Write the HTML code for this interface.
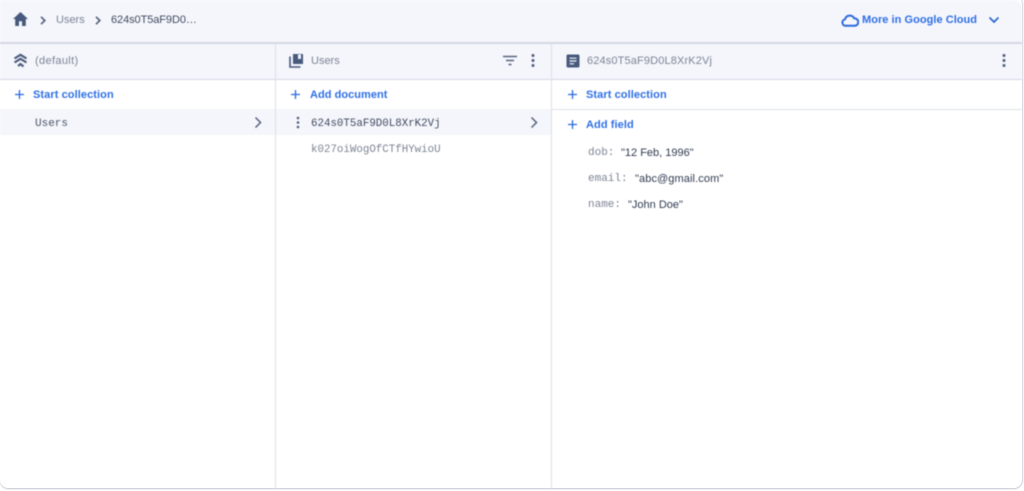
<!DOCTYPE html>
<html><head><meta charset="utf-8"><style>
html,body{margin:0;padding:0;background:#fff;width:1024px;height:491px;overflow:hidden}
body{position:relative;font-family:"Liberation Sans",sans-serif}
#card{position:absolute;left:0;top:-4px;width:1022px;height:492px;background:#fff;border-radius:0 8px 8px 8px;box-shadow:0 1px 1.5px #c4c8d2,1px 0 1.5px #d4d7de;overflow:hidden}
#w{position:absolute;left:0;top:0;width:1024px;height:491px;filter:blur(.4px)}
.bg{position:absolute}
.t{position:absolute;white-space:nowrap;font-size:11px;line-height:14px}
.b{color:#2f6fe4;font-weight:bold;font-size:11px;letter-spacing:.08px}
.m{font-family:"Liberation Mono",monospace;font-size:11px}
svg{position:absolute;display:block}
</style></head><body>
<div id="card"></div>
<div id="w">
<div class="bg" style="left:0;top:0;width:1022px;height:42px;background:#f5f6fc;border-radius:0 8px 0 0"></div>
<div class="bg" style="left:0;top:42px;width:1022px;height:1.5px;background:#d3d7e3"></div>
<div class="bg" style="left:0;top:43.5px;width:1022px;height:35px;background:#f5f6fc"></div>
<div class="bg" style="left:0;top:78.500px;width:1022px;height:1.5px;background:#d3d7e3"></div>
<div class="bg" style="left:0;top:109px;width:275px;height:26px;background:#f5f6fb"></div>
<div class="bg" style="left:276px;top:109px;width:275px;height:26px;background:#f5f6fb"></div>
<div class="bg" style="left:552px;top:109px;width:470px;height:1px;background:#dfe1e8"></div>
<div class="bg" style="left:274.500px;top:43px;width:1.2px;height:445px;background:#dcdfe8"></div>
<div class="bg" style="left:550.500px;top:43px;width:1.2px;height:445px;background:#dcdfe8"></div>

<svg style="left:12px;top:10.500px" width="17" height="16" viewBox="0 0 17 16"><path d="M8.500 1L1 8h2.200v7h3.800v-4.800h3V15h3.800V8H16z" fill="#47597c"/></svg>
<svg style="left:39px;top:15px" width="9" height="11" viewBox="0 0 9 11"><path d="M2 1.800l3.800 3.700L2 9.200" fill="none" stroke="#56637f" stroke-width="1.700"/></svg>
<div class="t" style="left:56px;top:13px;color:#7c8494;font-size:11px">Users</div>
<svg style="left:94px;top:15px" width="9" height="11" viewBox="0 0 9 11"><path d="M2 1.800l3.800 3.700L2 9.200" fill="none" stroke="#56637f" stroke-width="1.700"/></svg>
<div class="t" style="left:111px;top:13px;color:#3f4a60;font-size:11px;letter-spacing:-.08px">624s0T5aF9D0…</div>

<svg style="left:841px;top:13px" width="18" height="14" viewBox="0 0 18 14"><path d="M4.300 12.800a3.300 3.300 0 0 1-.3-6.500A5 5 0 0 1 13.300 5.400a3.700 3.700 0 0 1 .5 7.400z" fill="none" stroke="#2a6ae0" stroke-width="2"/></svg>
<div class="t b" style="left:862px;top:13px;font-size:11px;letter-spacing:.04px">More in Google Cloud</div>
<svg style="left:987px;top:15px" width="14" height="10" viewBox="0 0 14 10"><path d="M2.500 2.500L7 7l4.500-4.500" fill="none" stroke="#2d66c9" stroke-width="1.700"/></svg>

<svg style="left:13px;top:53px" width="15" height="15" viewBox="0 0 15 15"><path d="M1.500 5.500L7.500 1.800l6 3.700M1.500 9.500l6-3.700 6 3.700M5 13l2.500-2 3 2.500" fill="none" stroke="#4c5d7d" stroke-width="2.200"/></svg>
<div class="t" style="left:35px;top:54px;color:#7c8494;letter-spacing:.35px">(default)</div>

<svg style="left:289px;top:53px" width="15" height="15" viewBox="0 0 15 15"><path d="M4 1h10v10H4z" fill="#47597c"/><path d="M9 1.500h3v5l-1.500-1L9 6.500z" fill="#f5f6fc"/><path d="M1 3.500V14h10.500" fill="none" stroke="#47597c" stroke-width="1.600"/></svg>
<div class="t" style="left:311px;top:54px;color:#7c8494">Users</div>
<svg style="left:502px;top:54px" width="16" height="13" viewBox="0 0 16 13"><path d="M1 2.500h14M4 6.500h8M6.500 10.500h3" stroke="#56637f" stroke-width="1.500"/></svg>
<svg style="left:531px;top:53px" width="4" height="15" viewBox="0 0 4 15"><circle cx="2" cy="2.500" r="1.500" fill="#4f5e7c"/><circle cx="2" cy="7.500" r="1.500" fill="#4f5e7c"/><circle cx="2" cy="12.500" r="1.500" fill="#4f5e7c"/></svg>

<svg style="left:566px;top:54px" width="14" height="14" viewBox="0 0 14 14"><rect x="0.500" y="0.500" width="13" height="13" rx="1.500" fill="#47597c"/><path d="M3.500 4.200h7M3.500 7h7M3.500 9.800h4.500" stroke="#f5f6fc" stroke-width="1.200"/></svg>
<div class="t" style="left:587px;top:54px;color:#7c8494;letter-spacing:.14px">624s0T5aF9D0L8XrK2Vj</div>
<svg style="left:1002px;top:53px" width="4" height="15" viewBox="0 0 4 15"><circle cx="2" cy="2.500" r="1.500" fill="#4f5e7c"/><circle cx="2" cy="7.500" r="1.500" fill="#4f5e7c"/><circle cx="2" cy="12.500" r="1.500" fill="#4f5e7c"/></svg>

<svg style="left:15px;top:89.500px" width="9" height="9" viewBox="0 0 9 9"><path d="M4.500 0v9M0 4.500h9" stroke="#2a6ae0" stroke-width="1.300"/></svg>
<div class="t b" style="left:33px;top:88px">Start collection</div>
<svg style="left:291px;top:89.500px" width="9" height="9" viewBox="0 0 9 9"><path d="M4.500 0v9M0 4.500h9" stroke="#2a6ae0" stroke-width="1.300"/></svg>
<div class="t b" style="left:310px;top:88px;letter-spacing:.04px">Add document</div>
<svg style="left:568px;top:89.500px" width="9" height="9" viewBox="0 0 9 9"><path d="M4.500 0v9M0 4.500h9" stroke="#2a6ae0" stroke-width="1.300"/></svg>
<div class="t b" style="left:586px;top:88px">Start collection</div>
<svg style="left:568px;top:119.500px" width="9" height="9" viewBox="0 0 9 9"><path d="M4.500 0v9M0 4.500h9" stroke="#2a6ae0" stroke-width="1.300"/></svg>
<div class="t b" style="left:586px;top:118px">Add field</div>

<div class="t m" style="left:35px;top:117px;color:#4a5468">Users</div>
<svg style="left:254px;top:116px" width="8" height="13" viewBox="0 0 8 13"><path d="M1.500 1.500L6.500 6.500l-5 5" fill="none" stroke="#56637f" stroke-width="1.500"/></svg>
<svg style="left:296px;top:116px" width="4" height="13" viewBox="0 0 4 13"><circle cx="2" cy="2" r="1.300" fill="#4f5e7c"/><circle cx="2" cy="6.500" r="1.300" fill="#4f5e7c"/><circle cx="2" cy="11" r="1.300" fill="#4f5e7c"/></svg>
<div class="t m" style="left:311px;top:117px;color:#3f4a60;font-size:10.800px">624s0T5aF9D0L8XrK2Vj</div>
<svg style="left:530px;top:116px" width="8" height="13" viewBox="0 0 8 13"><path d="M1.500 1.500L6.500 6.500l-5 5" fill="none" stroke="#56637f" stroke-width="1.500"/></svg>
<div class="t m" style="left:311px;top:143px;color:#7c8494;font-size:10.800px">k027oiWogOfCTfHYwioU</div>

<div class="t m" style="left:588px;top:146px;color:#7c8494">dob:</div>
<div class="t" style="left:621px;top:146px;color:#2f3a4f;font-size:11px">"12 Feb, 1996"</div>
<div class="t m" style="left:588px;top:172px;color:#7c8494">email:</div>
<div class="t" style="left:635px;top:172px;color:#2f3a4f;font-size:11px;letter-spacing:.1px">"abc@gmail.com"</div>
<div class="t m" style="left:588px;top:198px;color:#7c8494">name:</div>
<div class="t" style="left:628px;top:198px;color:#2f3a4f;font-size:11px">"John Doe"</div>
</div>
</body></html>
